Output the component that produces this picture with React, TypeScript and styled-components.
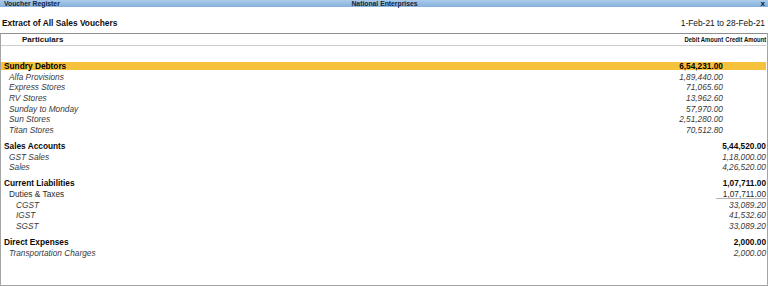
import React from "react";
import styled, { createGlobalStyle, css } from "styled-components";

const GlobalStyle = createGlobalStyle`
  html, body { margin: 0; padding: 0; background: #ffffff; }
  body { font-family: "Liberation Sans", Arial, sans-serif; color: #000; }
  * { box-sizing: border-box; }
`;

const Frame = styled.div`
  width: 768px;
  height: 287px;
  display: flex;
  flex-direction: column;
  overflow: hidden;
`;

const TitleBar = styled.div`
  height: 7px;
  flex: none;
  display: grid;
  grid-template-columns: 1fr auto 1fr;
  align-items: center;
  padding: 0 3px 0 4px;
  background: linear-gradient(#a9cbeb, #86b0db);
  color: #14243c;
  font-size: 6.8px;
  font-weight: bold;
  line-height: 7px;
  white-space: nowrap;
`;

const TitleLeft = styled.span`
  justify-self: start;
`;
const TitleCenter = styled.span`
  justify-self: center;
`;
const Close = styled.span`
  justify-self: end;
  font-size: 8px;
  font-weight: bold;
  color: #0d1a2e;
`;

const Header = styled.div`
  height: 26px;
  flex: none;
  display: flex;
  justify-content: space-between;
  align-items: flex-start;
  padding: 11px 3px 0 2px;
  font-size: 8.4px;
  line-height: 10px;
  color: #111;
`;

const ReportTitle = styled.span`
  font-weight: bold;
`;

const Period = styled.span``;

const Panel = styled.div`
  flex: 1;
  display: flex;
  flex-direction: column;
  border-top: 1px solid #8e8e8e;
  border-left: 1px solid #a4a4a4;
  border-right: 1px solid #a4a4a4;
  border-bottom: 1px solid #a4a4a4;
  margin-bottom: 1px;
  padding-right: 1px;
`;

const ColumnHeader = styled.div`
  height: 12px;
  flex: none;
  display: grid;
  grid-template-columns: 1fr 60px 43px;
  align-items: center;
  border-bottom: 1px solid #cfcfcf;
  font-weight: bold;
  font-size: 8px;
  line-height: 11px;
  color: #111;
`;

const HeadParticulars = styled.span`
  padding-left: 21px;
`;

const HeadAmount = styled.span`
  justify-self: end;
  display: inline-block;
  transform: scaleX(0.74);
  transform-origin: right center;
  white-space: nowrap;
  font-size: 8px;
`;

const Body = styled.div`
  padding-top: 16px;
  display: flex;
  flex-direction: column;
  gap: 8px;
`;

const Group = styled.div`
  display: flex;
  flex-direction: column;
  gap: 2.67px;
`;

type Kind = "group" | "ledger" | "subgroup";

const Row = styled.div<{ $kind: Kind; $indent: number; $selected?: boolean }>`
  height: 8px;
  flex: none;
  display: grid;
  grid-template-columns: 1fr 60px 43px;
  align-items: center;
  font-size: 8.3px;
  line-height: 8px;
  white-space: nowrap;
  padding-left: ${(p) => p.$indent}px;
  ${(p) =>
    p.$kind === "group" &&
    css`
      font-weight: bold;
      color: #0a0a0a;
    `}
  ${(p) =>
    p.$kind === "ledger" &&
    css`
      font-style: italic;
      color: #3a3a3a;
    `}
  ${(p) =>
    p.$kind === "subgroup" &&
    css`
      color: #2a2a2a;
    `}
  ${(p) =>
    p.$selected &&
    css`
      background: #f6c23c;
      color: #000;
    `}
`;

const Name = styled.span``;

const Amount = styled.span<{ $underline?: boolean }>`
  justify-self: end;
  position: relative;
  ${(p) =>
    p.$underline &&
    css`
      &::after {
        content: "";
        position: absolute;
        right: 0;
        bottom: -1.5px;
        width: 50px;
        height: 1px;
        background: #b5b5b5;
      }
    `}
`;

type Line = {
  name: string;
  kind: Kind;
  indent: number;
  debit?: string;
  credit?: string;
  underline?: boolean;
  selected?: boolean;
};

const groups: Line[][] = [
  [
    { name: "Sundry Debtors", kind: "group", indent: 3, debit: "6,54,231.00", selected: true },
    { name: "Alfa Provisions", kind: "ledger", indent: 8, debit: "1,89,440.00" },
    { name: "Express Stores", kind: "ledger", indent: 8, debit: "71,065.60" },
    { name: "RV Stores", kind: "ledger", indent: 8, debit: "13,962.60" },
    { name: "Sunday to Monday", kind: "ledger", indent: 8, debit: "57,970.00" },
    { name: "Sun Stores", kind: "ledger", indent: 8, debit: "2,51,280.00" },
    { name: "Titan Stores", kind: "ledger", indent: 8, debit: "70,512.80" },
  ],
  [
    { name: "Sales Accounts", kind: "group", indent: 3, credit: "5,44,520.00" },
    { name: "GST Sales", kind: "ledger", indent: 8, credit: "1,18,000.00" },
    { name: "Sales", kind: "ledger", indent: 8, credit: "4,26,520.00" },
  ],
  [
    { name: "Current Liabilities", kind: "group", indent: 3, credit: "1,07,711.00" },
    { name: "Duties & Taxes", kind: "subgroup", indent: 8, credit: "1,07,711.00", underline: true },
    { name: "CGST", kind: "ledger", indent: 15, credit: "33,089.20" },
    { name: "IGST", kind: "ledger", indent: 15, credit: "41,532.60" },
    { name: "SGST", kind: "ledger", indent: 15, credit: "33,089.20" },
  ],
  [
    { name: "Direct Expenses", kind: "group", indent: 3, credit: "2,000.00" },
    { name: "Transportation Charges", kind: "ledger", indent: 8, credit: "2,000.00" },
  ],
];

export default function App() {
  return (
    <>
      <GlobalStyle />
      <Frame>
        <TitleBar>
          <TitleLeft>Voucher Register</TitleLeft>
          <TitleCenter>National Enterprises</TitleCenter>
          <Close>x</Close>
        </TitleBar>
        <Header>
          <ReportTitle>Extract of All Sales Vouchers</ReportTitle>
          <Period>1-Feb-21 to 28-Feb-21</Period>
        </Header>
        <Panel>
          <ColumnHeader>
            <HeadParticulars>Particulars</HeadParticulars>
            <HeadAmount>Debit Amount</HeadAmount>
            <HeadAmount>Credit Amount</HeadAmount>
          </ColumnHeader>
          <Body>
            {groups.map((g, gi) => (
              <Group key={gi}>
                {g.map((l) => (
                  <Row key={l.name} $kind={l.kind} $indent={l.indent} $selected={l.selected}>
                    <Name>{l.name}</Name>
                    <Amount>{l.debit ?? ""}</Amount>
                    <Amount $underline={l.underline}>{l.credit ?? ""}</Amount>
                  </Row>
                ))}
              </Group>
            ))}
          </Body>
        </Panel>
      </Frame>
    </>
  );
}
